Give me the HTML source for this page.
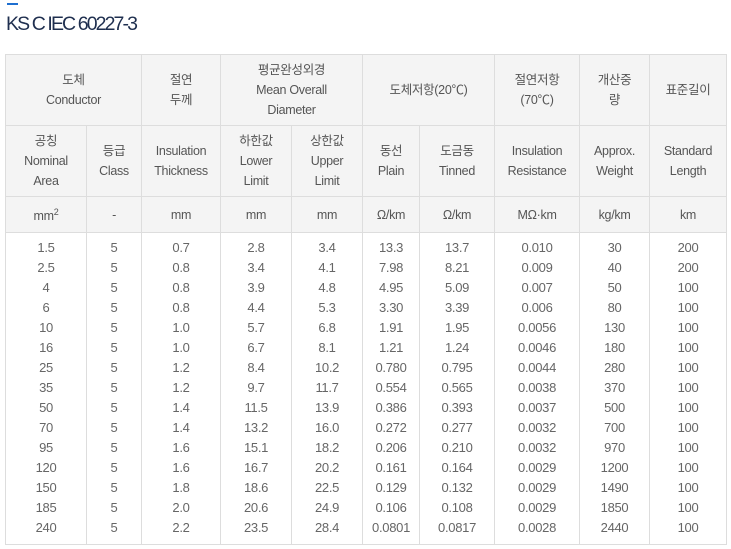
<!DOCTYPE html>
<html><head><meta charset="utf-8"><style>
body{margin:0;background:#fff;font-family:"Liberation Sans","Noto Sans CJK KR",sans-serif;}
.bar{position:absolute;left:7px;top:3px;width:11px;height:2px;background:#1e6fd0;}
.title{position:absolute;left:6px;top:12px;font-size:19.5px;color:#1f2f4f;letter-spacing:-1.9px;line-height:24px;}
table{position:absolute;left:5px;top:54px;border-collapse:collapse;table-layout:fixed;width:721px;font-size:12.5px;color:#555;}
td{border:1px solid #ddd;text-align:center;padding:0;letter-spacing:-0.3px;}
.h td{background:#f4f4f4;line-height:20px;}
.d td{vertical-align:top;padding:5px 0 6px;line-height:20px;font-size:13px;color:#666;}
</style></head><body>
<div class="bar"></div>
<div class="title">KS C IEC 60227-3</div>
<table>
<colgroup><col style="width:81px"><col style="width:55px"><col style="width:79px"><col style="width:71px"><col style="width:71px"><col style="width:57px"><col style="width:75px"><col style="width:85px"><col style="width:70px"><col style="width:77px"></colgroup>
<tr class="h" style="height:71px"><td colspan="2">도체<br>Conductor</td><td>절연<br>두께</td><td colspan="2">평균완성외경<br>Mean Overall<br>Diameter</td><td colspan="2">도체저항(20℃)</td><td>절연저항<br>(70℃)</td><td>개산중<br>량</td><td>표준길이</td></tr>
<tr class="h" style="height:71px"><td>공칭<br>Nominal<br>Area</td><td>등급<br>Class</td><td>Insulation<br>Thickness</td><td>하한값<br>Lower<br>Limit</td><td>상한값<br>Upper<br>Limit</td><td>동선<br>Plain</td><td>도금동<br>Tinned</td><td>Insulation<br>Resistance</td><td>Approx.<br>Weight</td><td>Standard<br>Length</td></tr>
<tr class="h" style="height:36px"><td>mm<sup style="font-size:9px">2</sup></td><td>-</td><td>mm</td><td>mm</td><td>mm</td><td>Ω/km</td><td>Ω/km</td><td>MΩ·km</td><td>kg/km</td><td>km</td></tr>
<tr class="d">
<td>1.5<br>2.5<br>4<br>6<br>10<br>16<br>25<br>35<br>50<br>70<br>95<br>120<br>150<br>185<br>240</td>
<td>5<br>5<br>5<br>5<br>5<br>5<br>5<br>5<br>5<br>5<br>5<br>5<br>5<br>5<br>5</td>
<td>0.7<br>0.8<br>0.8<br>0.8<br>1.0<br>1.0<br>1.2<br>1.2<br>1.4<br>1.4<br>1.6<br>1.6<br>1.8<br>2.0<br>2.2</td>
<td>2.8<br>3.4<br>3.9<br>4.4<br>5.7<br>6.7<br>8.4<br>9.7<br>11.5<br>13.2<br>15.1<br>16.7<br>18.6<br>20.6<br>23.5</td>
<td>3.4<br>4.1<br>4.8<br>5.3<br>6.8<br>8.1<br>10.2<br>11.7<br>13.9<br>16.0<br>18.2<br>20.2<br>22.5<br>24.9<br>28.4</td>
<td>13.3<br>7.98<br>4.95<br>3.30<br>1.91<br>1.21<br>0.780<br>0.554<br>0.386<br>0.272<br>0.206<br>0.161<br>0.129<br>0.106<br>0.0801</td>
<td>13.7<br>8.21<br>5.09<br>3.39<br>1.95<br>1.24<br>0.795<br>0.565<br>0.393<br>0.277<br>0.210<br>0.164<br>0.132<br>0.108<br>0.0817</td>
<td>0.010<br>0.009<br>0.007<br>0.006<br>0.0056<br>0.0046<br>0.0044<br>0.0038<br>0.0037<br>0.0032<br>0.0032<br>0.0029<br>0.0029<br>0.0029<br>0.0028</td>
<td>30<br>40<br>50<br>80<br>130<br>180<br>280<br>370<br>500<br>700<br>970<br>1200<br>1490<br>1850<br>2440</td>
<td>200<br>200<br>100<br>100<br>100<br>100<br>100<br>100<br>100<br>100<br>100<br>100<br>100<br>100<br>100</td>
</tr>
</table>
</body></html>
